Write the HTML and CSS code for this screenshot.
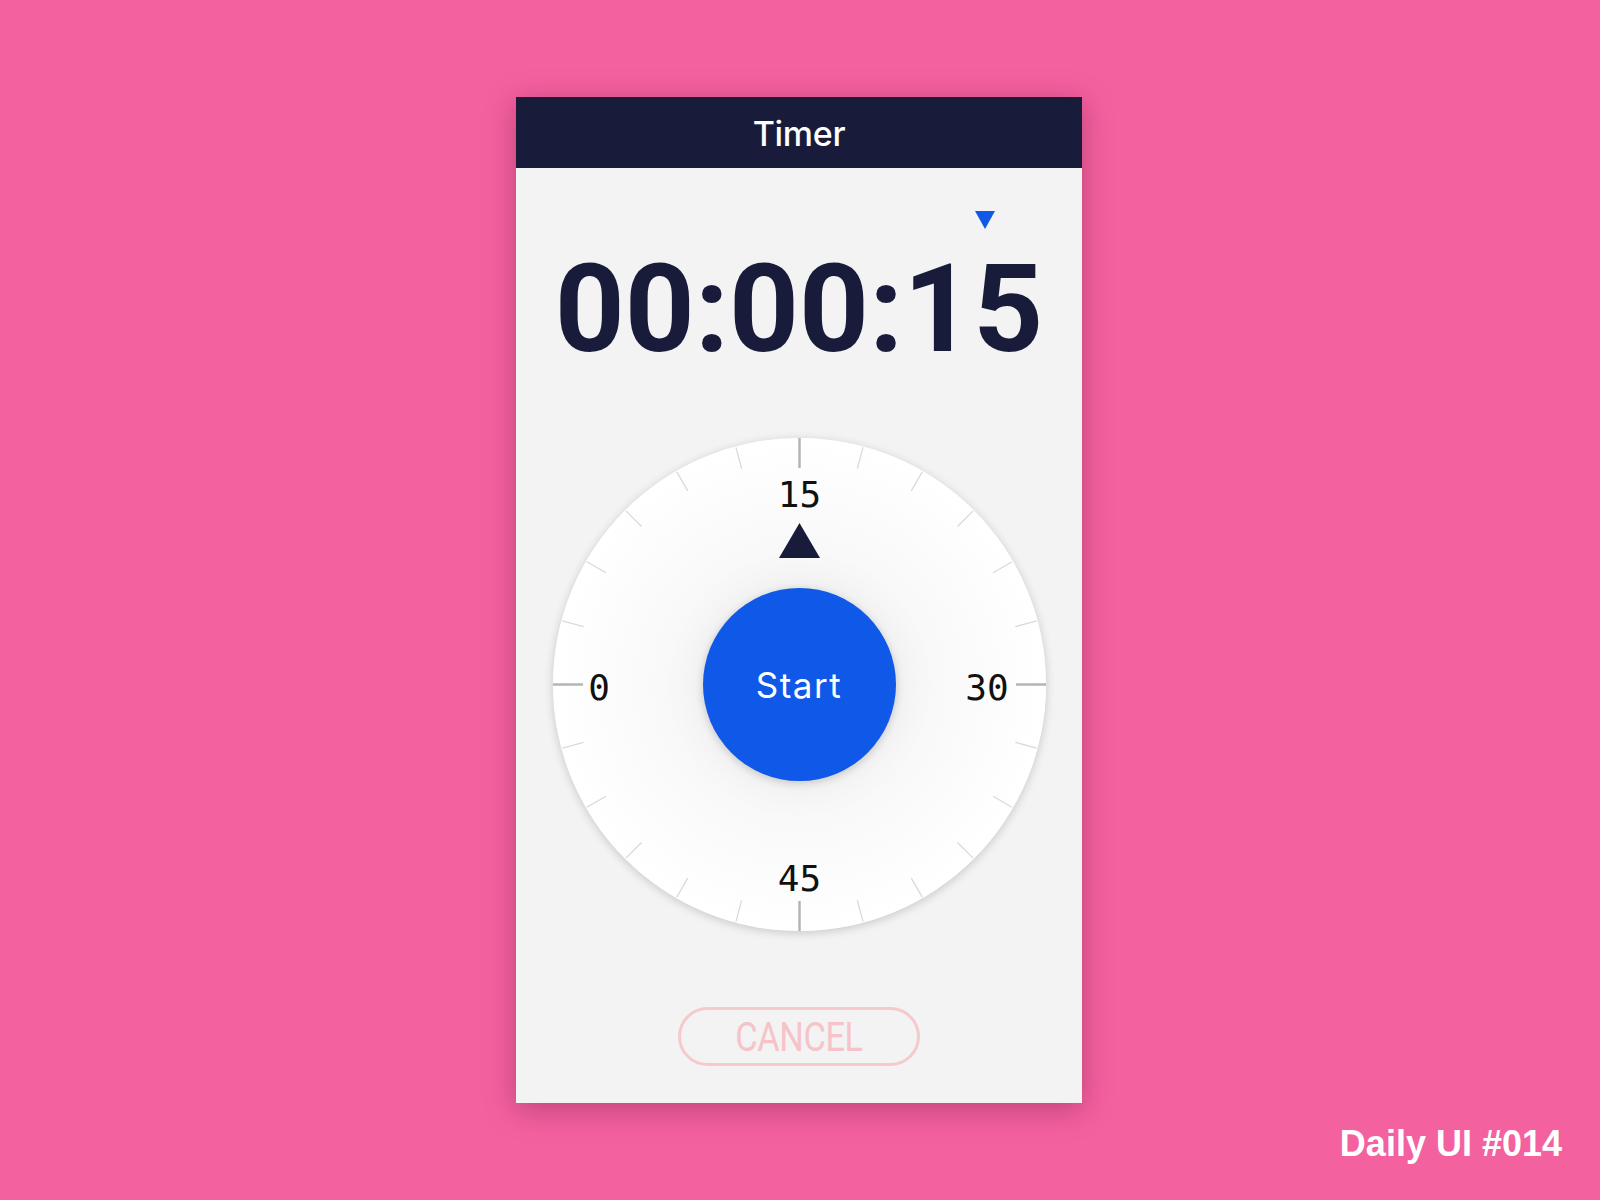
FILE: index.html
```html
<!DOCTYPE html>
<html lang="en">
<head>
<meta charset="utf-8">
<title>Timer</title>
<link rel="stylesheet" href="styles.css">
</head>
<body>
<main class="stage">
  <section class="card">
    <header class="card-header"><h1 class="title">Timer</h1></header>
    <div class="card-body">
      <div class="marker-row"><span class="marker"></span></div>
      <div class="time">00:00:15</div>
      <div class="dial">
        <svg class="dial-face" width="493" height="493" viewBox="0 0 493 493">
          <g class="ticks">
            <line class="major" x1="246.5" y1="0" x2="246.5" y2="30" transform="rotate(0 246.5 246.5)"/>
            <line x1="246.5" y1="1" x2="246.5" y2="23" transform="rotate(15 246.5 246.5)"/>
            <line x1="246.5" y1="1" x2="246.5" y2="23" transform="rotate(30 246.5 246.5)"/>
            <line x1="246.5" y1="1" x2="246.5" y2="23" transform="rotate(45 246.5 246.5)"/>
            <line x1="246.5" y1="1" x2="246.5" y2="23" transform="rotate(60 246.5 246.5)"/>
            <line x1="246.5" y1="1" x2="246.5" y2="23" transform="rotate(75 246.5 246.5)"/>
            <line class="major" x1="246.5" y1="0" x2="246.5" y2="30" transform="rotate(90 246.5 246.5)"/>
            <line x1="246.5" y1="1" x2="246.5" y2="23" transform="rotate(105 246.5 246.5)"/>
            <line x1="246.5" y1="1" x2="246.5" y2="23" transform="rotate(120 246.5 246.5)"/>
            <line x1="246.5" y1="1" x2="246.5" y2="23" transform="rotate(135 246.5 246.5)"/>
            <line x1="246.5" y1="1" x2="246.5" y2="23" transform="rotate(150 246.5 246.5)"/>
            <line x1="246.5" y1="1" x2="246.5" y2="23" transform="rotate(165 246.5 246.5)"/>
            <line class="major" x1="246.5" y1="0" x2="246.5" y2="30" transform="rotate(180 246.5 246.5)"/>
            <line x1="246.5" y1="1" x2="246.5" y2="23" transform="rotate(195 246.5 246.5)"/>
            <line x1="246.5" y1="1" x2="246.5" y2="23" transform="rotate(210 246.5 246.5)"/>
            <line x1="246.5" y1="1" x2="246.5" y2="23" transform="rotate(225 246.5 246.5)"/>
            <line x1="246.5" y1="1" x2="246.5" y2="23" transform="rotate(240 246.5 246.5)"/>
            <line x1="246.5" y1="1" x2="246.5" y2="23" transform="rotate(255 246.5 246.5)"/>
            <line class="major" x1="246.5" y1="0" x2="246.5" y2="30" transform="rotate(270 246.5 246.5)"/>
            <line x1="246.5" y1="1" x2="246.5" y2="23" transform="rotate(285 246.5 246.5)"/>
            <line x1="246.5" y1="1" x2="246.5" y2="23" transform="rotate(300 246.5 246.5)"/>
            <line x1="246.5" y1="1" x2="246.5" y2="23" transform="rotate(315 246.5 246.5)"/>
            <line x1="246.5" y1="1" x2="246.5" y2="23" transform="rotate(330 246.5 246.5)"/>
            <line x1="246.5" y1="1" x2="246.5" y2="23" transform="rotate(345 246.5 246.5)"/>
          </g>
          <g class="labels">
            <text x="246.5" y="69">15</text>
            <text x="46" y="262">0</text>
            <text x="434" y="262">30</text>
            <text x="246.5" y="453">45</text>
          </g>
          <polygon class="pointer" points="246.5,85 267,120 226,120"/>
        </svg>
        <button class="start">Start</button>
      </div>
      <button class="cancel"><span class="cancel-label">CANCEL</span></button>
    </div>
  </section>
  <p class="credit">Daily UI #014</p>
</main>
</body>
</html>
```

FILE: styles.css
```css
html, body {
  margin: 0;
  padding: 0;
}
body {
  width: 1600px;
  height: 1200px;
  background: #f4619f;
  font-family: Inter, "Noto Sans", sans-serif;
  overflow: hidden;
}
.stage {
  position: relative;
  width: 1600px;
  height: 1200px;
  display: flex;
  flex-direction: column;
  align-items: center;
  padding-top: 97px;
  padding-right: 2px;
  box-sizing: border-box;
}
.card {
  width: 566px;
  height: 1006px;
  background: #f3f3f3;
  box-shadow: 0 6px 28px rgba(90, 10, 50, 0.35);
  display: flex;
  flex-direction: column;
}
.card-header {
  height: 71px;
  background: #181c3a;
  display: flex;
  align-items: center;
  justify-content: center;
}
.title {
  margin: 2px 0 0;
  color: #ffffff;
  font-size: 34px;
  font-weight: 500;
  letter-spacing: -0.3px;
}
.card-body {
  display: flex;
  flex-direction: column;
  align-items: center;
}
.marker-row {
  width: 100%;
  box-sizing: border-box;
  display: flex;
  justify-content: flex-end;
  padding-right: 87px;
  margin-top: 43px;
}
.marker {
  width: 0;
  height: 0;
  border-left: 10.5px solid transparent;
  border-right: 10.5px solid transparent;
  border-top: 18px solid #1058e8;
}
.time {
  margin-top: 21px;
  font-family: Roboto, Inter, sans-serif;
  font-size: 122px;
  font-weight: 700;
  line-height: 120px;
  color: #181c3a;
  letter-spacing: 0;
  font-variant-numeric: tabular-nums;
}
.dial {
  margin-top: 68px;
  width: 493px;
  height: 493px;
  border-radius: 50%;
  display: grid;
  background: radial-gradient(circle at center, #f2f2f2 0%, #f8f8f8 35%, #ffffff 70%);
  box-shadow: 0 2px 10px rgba(0, 0, 0, 0.18);
}
.dial-face {
  grid-area: 1 / 1;
}
.dial-face .ticks line {
  stroke: #dadada;
  stroke-width: 1.3;
}
.dial-face .ticks line.major {
  stroke: #b4b4b4;
  stroke-width: 2.5;
}
.dial-face .labels text {
  font-family: "DejaVu Sans Mono", monospace;
  font-size: 36px;
  fill: #111111;
  text-anchor: middle;
}
.pointer {
  fill: #181c3a;
}
.start {
  grid-area: 1 / 1;
  place-self: center;
  width: 193px;
  height: 193px;
  border-radius: 50%;
  border: none;
  background: #1058e8;
  color: #ffffff;
  font-family: Inter, "Noto Sans", sans-serif;
  font-size: 35px;
  font-weight: 400;
  letter-spacing: 1.5px;
  padding: 0;
  box-shadow: 0 2px 8px rgba(0, 0, 0, 0.18), 0 0 50px rgba(0, 0, 0, 0.06);
}
.cancel {
  margin-top: 76px;
  width: 242px;
  height: 59px;
  border: 3px solid #f6c9cc;
  border-radius: 30px;
  background: transparent;
  color: #f6c3c8;
  font-family: Roboto, "Liberation Sans", sans-serif;
  font-size: 40px;
  font-weight: 400;
  padding: 0;
  line-height: 1;
  display: flex;
  align-items: center;
  justify-content: center;
}
.cancel-label {
  display: inline-block;
  transform: scaleX(0.86);
  letter-spacing: -0.5px;
  margin-top: 2px;
}
.credit {
  position: absolute;
  right: 38px;
  bottom: 35px;
  margin: 0;
  color: #ffffff;
  font-family: "Liberation Sans", Arial, sans-serif;
  font-weight: 700;
  font-size: 36px;
}
```
